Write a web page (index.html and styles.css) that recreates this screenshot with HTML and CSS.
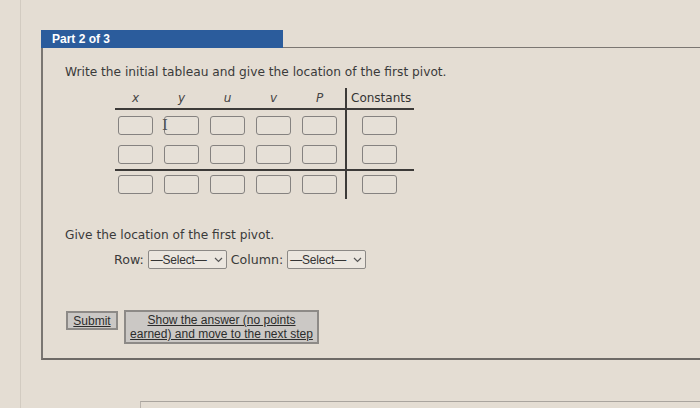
FILE: index.html
```html
<!DOCTYPE html>
<html>
<head>
<meta charset="utf-8">
<link rel="stylesheet" href="styles.css">
</head>
<body>
<div class="page">
  <div class="panel">
    <div class="panel-head">
      <div class="tab">Part 2 of 3</div>
      <div class="head-line"></div>
    </div>
    <div class="panel-body">
      <p class="prompt">Write the initial tableau and give the location of the first pivot.</p>
      <div class="tableau">
        <div class="th"><i>x</i></div>
        <div class="th"><i>y</i></div>
        <div class="th"><i>u</i></div>
        <div class="th"><i>v</i></div>
        <div class="th"><i>P</i></div>
        <div class="th const">Constants</div>

        <div class="td r1"><span class="box"></span></div>
        <div class="td r1"><span class="box"></span><span class="cursor">I</span></div>
        <div class="td r1"><span class="box"></span></div>
        <div class="td r1"><span class="box"></span></div>
        <div class="td r1"><span class="box"></span></div>
        <div class="td r1 const"><span class="box"></span></div>

        <div class="td r2"><span class="box"></span></div>
        <div class="td r2"><span class="box"></span></div>
        <div class="td r2"><span class="box"></span></div>
        <div class="td r2"><span class="box"></span></div>
        <div class="td r2"><span class="box"></span></div>
        <div class="td r2 const"><span class="box"></span></div>

        <div class="td r3"><span class="box"></span></div>
        <div class="td r3"><span class="box"></span></div>
        <div class="td r3"><span class="box"></span></div>
        <div class="td r3"><span class="box"></span></div>
        <div class="td r3"><span class="box"></span></div>
        <div class="td r3 const"><span class="box"></span></div>
      </div>
      <p class="prompt second">Give the location of the first pivot.</p>
      <div class="pivot">
        <span class="lbl">Row:</span>
        <span class="select">&mdash;Select&mdash;<svg class="chev" width="9" height="6" viewBox="0 0 9 6"><path d="M1 1 L4.5 4.5 L8 1" fill="none" stroke="#555" stroke-width="1.2"/></svg></span>
        <span class="lbl">Column:</span>
        <span class="select">&mdash;Select&mdash;<svg class="chev" width="9" height="6" viewBox="0 0 9 6"><path d="M1 1 L4.5 4.5 L8 1" fill="none" stroke="#555" stroke-width="1.2"/></svg></span>
      </div>
      <div class="actions">
        <button class="btn submit">Submit</button>
        <button class="btn show">Show the answer (no points<br>earned) and move to the next step</button>
      </div>
    </div>
  </div>
  <div class="next-box"></div>
</div>
</body>
</html>
```
FILE: styles.css
```css
html, body {
  margin: 0;
  padding: 0;
}
body {
  width: 700px;
  height: 408px;
  overflow: hidden;
  background: #e4ddd3;
  font-family: "DejaVu Sans", Verdana, sans-serif;
  color: #3a3a3a;
}
.page {
  margin-left: 20px;
  border-left: 1px solid #d2cbc1;
  height: 408px;
  padding-top: 30px;
  box-sizing: border-box;
}
.panel {
  margin-left: 20px;
  border-left: 2px solid #7a7672;
  border-bottom: 2px solid #6e6a66;
  height: 330px;
  box-sizing: border-box;
}
.panel-head {
  display: flex;
  align-items: flex-end;
  margin-left: -2px;
}
.tab {
  width: 242px;
  height: 18px;
  background: #2b5c9c;
  color: #fff;
  font-family: "Liberation Sans", Arial, sans-serif;
  font-weight: bold;
  font-size: 12px;
  line-height: 18px;
  padding-left: 11px;
  box-sizing: border-box;
}
.head-line {
  flex: 1;
  border-bottom: 1.5px solid #7b7672;
}
.panel-body {
  padding-left: 22px;
}
.prompt {
  margin: 0;
  font-size: 12.2px;
  padding-top: 17px;
  line-height: 14px;
}
.tableau {
  margin-left: 50px;
  margin-top: 9px;
  display: grid;
  grid-template-columns: 46px 46px 46px 46px 46px 69px;
  width: 299px;
}
.th {
  height: 20px;
  border-bottom: 2px solid #3c3a38;
  font-size: 12px;
  line-height: 20px;
  color: #444;
  padding-left: 3px;
  width: 35px;
  text-align: center;
  box-sizing: content-box;
  padding-right: 8px;
}
.th i {
  font-family: "DejaVu Sans", sans-serif;
}
.th.const {
  border-left: 2px solid #3c3a38;
  width: auto;
  padding: 0 0 0 4px;
  text-align: left;
  color: #333;
}
.td {
  position: relative;
  padding-left: 3px;
}
.td.const {
  border-left: 2px solid #3c3a38;
  padding-left: 15px;
}
.r1 { height: 30px; padding-top: 6px; box-sizing: border-box; }
.r2 { height: 31px; padding-top: 5px; box-sizing: border-box; border-bottom: 2px solid #3c3a38; }
.r3 { height: 28px; padding-top: 4px; box-sizing: border-box; }
.box {
  display: block;
  width: 35px;
  height: 19px;
  box-sizing: border-box;
  border: 1.5px solid #858280;
  border-radius: 3px;
  background: #e6e0d7;
}
.cursor {
  position: absolute;
  left: 1px;
  top: 6px;
  font-family: "DejaVu Serif", serif;
  font-size: 15px;
  color: #555;
  line-height: 18px;
}
.prompt.second {
  padding-top: 29px;
}
.pivot {
  display: flex;
  align-items: center;
  margin-left: 49px;
  margin-top: 8px;
  gap: 4px;
  font-size: 12.6px;
}
.lbl {
  color: #3a3a3a;
}
.select {
  display: inline-flex;
  align-items: center;
  justify-content: space-between;
  width: 79px;
  height: 19px;
  padding: 0 3px 0 2px;
  border: 1px solid #8c8986;
  border-radius: 2px;
  background: #ebe6df;
  font-family: "Liberation Sans", Arial, sans-serif;
  font-size: 12px;
  letter-spacing: -0.2px;
  color: #333;
  box-sizing: border-box;
}
.actions {
  display: flex;
  align-items: flex-start;
  gap: 6px;
  margin-top: 42px;
  margin-left: 1px;
}
.btn {
  font-family: "Liberation Sans", Arial, sans-serif;
  font-size: 12px;
  color: #2c2c2c;
  text-decoration: underline;
  background: #cbc8c5;
  border: 2px solid #8d8a87;
  padding: 0;
  margin: 0;
}
.submit {
  width: 52px;
  height: 19px;
  line-height: 14px;
}
.show {
  width: 195px;
  height: 34px;
  line-height: 14px;
  margin-top: -1px;
}
.next-box {
  margin-left: 119px;
  margin-top: 41px;
  border-top: 1px solid #a9a49e;
  border-left: 1px solid #b8b2ab;
  height: 20px;
}
```
